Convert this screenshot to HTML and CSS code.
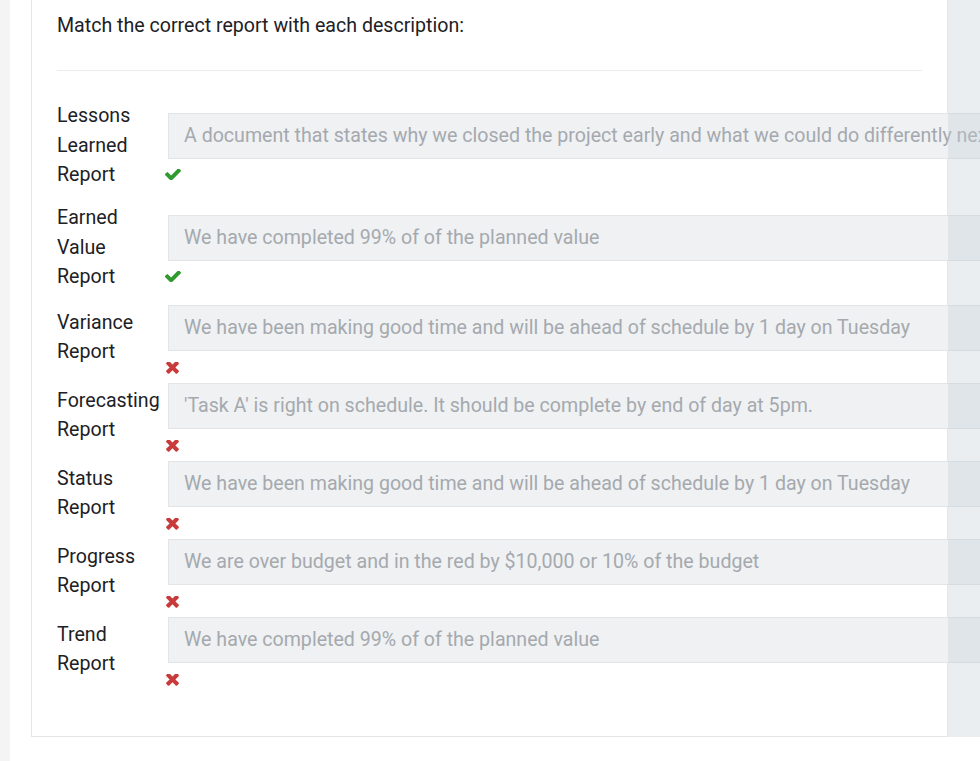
FILE: index.html
```html
<!DOCTYPE html>
<html lang="en">

<head>
    <meta charset="utf-8">
    <meta name="viewport" content="width=device-width, initial-scale=1.0">
    <title>Match reports</title>
    <link rel="stylesheet" href="styles.css">
</head>

<body>
    <div class="strip"></div>

    <main class="side">
        <div class="kort">
            <p class="spoergsmaal">Match the correct report with each description:</p>
            <hr class="streg">

            <div class="raekker">
                <div class="raekke">
                    <div class="navn">Lessons Learned Report</div>
                    <div class="svar">
                        <div class="felt">A document that states why we closed the project early and what we could do differently next time</div>
                        <div class="ikon"><svg class="rigtig" viewBox="120 420 1560 1020"><path d="M1671 566q0 40-28 68l-724 724-136 136q-28 28-68 28t-68-28l-136-136-362-362q-28-28-28-68t28-68l136-136q28-28 68-28t68 28l294 295 656-657q28-28 68-28t68 28l136 136q28 28 28 68z"/></svg></div>
                    </div>
                </div>

                <div class="raekke">
                    <div class="navn">Earned Value Report</div>
                    <div class="svar">
                        <div class="felt">We have completed 99% of of the planned value</div>
                        <div class="ikon"><svg class="rigtig" viewBox="120 420 1560 1020"><path d="M1671 566q0 40-28 68l-724 724-136 136q-28 28-68 28t-68-28l-136-136-362-362q-28-28-28-68t28-68l136-136q28-28 68-28t68 28l294 295 656-657q28-28 68-28t68 28l136 136q28 28 28 68z"/></svg></div>
                    </div>
                </div>

                <div class="raekke">
                    <div class="navn">Variance Report</div>
                    <div class="svar">
                        <div class="felt">We have been making good time and will be ahead of schedule by 1 day on Tuesday</div>
                        <div class="ikon"><svg class="forkert" viewBox="100 460 1210 1110"><path d="M1298 1322q0 40-28 68l-136 136q-28 28-68 28t-68-28l-294-294-294 294q-28 28-68 28t-68-28l-136-136q-28-28-28-68t28-68l294-294-294-294q-28-28-28-68t28-68l136-136q28-28 68-28t68 28l294 294 294-294q28-28 68-28t68 28l136 136q28 28 28 68t-28 68l-294 294 294 294q28 28 28 68z"/></svg></div>
                    </div>
                </div>

                <div class="raekke">
                    <div class="navn">Forecasting Report</div>
                    <div class="svar">
                        <div class="felt">'Task A' is right on schedule. It should be complete by end of day at 5pm.</div>
                        <div class="ikon"><svg class="forkert" viewBox="100 460 1210 1110"><path d="M1298 1322q0 40-28 68l-136 136q-28 28-68 28t-68-28l-294-294-294 294q-28 28-68 28t-68-28l-136-136q-28-28-28-68t28-68l294-294-294-294q-28-28-28-68t28-68l136-136q28-28 68-28t68 28l294 294 294-294q28-28 68-28t68 28l136 136q28 28 28 68t-28 68l-294 294 294 294q28 28 28 68z"/></svg></div>
                    </div>
                </div>

                <div class="raekke">
                    <div class="navn">Status Report</div>
                    <div class="svar">
                        <div class="felt">We have been making good time and will be ahead of schedule by 1 day on Tuesday</div>
                        <div class="ikon"><svg class="forkert" viewBox="100 460 1210 1110"><path d="M1298 1322q0 40-28 68l-136 136q-28 28-68 28t-68-28l-294-294-294 294q-28 28-68 28t-68-28l-136-136q-28-28-28-68t28-68l294-294-294-294q-28-28-28-68t28-68l136-136q28-28 68-28t68 28l294 294 294-294q28-28 68-28t68 28l136 136q28 28 28 68t-28 68l-294 294 294 294q28 28 28 68z"/></svg></div>
                    </div>
                </div>

                <div class="raekke">
                    <div class="navn">Progress Report</div>
                    <div class="svar">
                        <div class="felt">We are over budget and in the red by $10,000 or 10% of the budget</div>
                        <div class="ikon"><svg class="forkert" viewBox="100 460 1210 1110"><path d="M1298 1322q0 40-28 68l-136 136q-28 28-68 28t-68-28l-294-294-294 294q-28 28-68 28t-68-28l-136-136q-28-28-28-68t28-68l294-294-294-294q-28-28-28-68t28-68l136-136q28-28 68-28t68 28l294 294 294-294q28-28 68-28t68 28l136 136q28 28 28 68t-28 68l-294 294 294 294q28 28 28 68z"/></svg></div>
                    </div>
                </div>

                <div class="raekke">
                    <div class="navn">Trend Report</div>
                    <div class="svar">
                        <div class="felt">We have completed 99% of of the planned value</div>
                        <div class="ikon"><svg class="forkert" viewBox="100 460 1210 1110"><path d="M1298 1322q0 40-28 68l-136 136q-28 28-68 28t-68-28l-294-294-294 294q-28 28-68 28t-68-28l-136-136q-28-28-28-68t28-68l294-294-294-294q-28-28-28-68t28-68l136-136q28-28 68-28t68 28l294 294 294-294q28-28 68-28t68 28l136 136q28 28 28 68t-28 68l-294 294 294 294q28 28 28 68z"/></svg></div>
                    </div>
                </div>
            </div>
        </div>

        <div class="panel"></div>
    </main>
</body>

</html>
```

FILE: styles.css
```css
body {
    margin: 0;
    display: flex;
    min-height: 761px;
    overflow: hidden;
    background-color: #ffffff;
    font-family: Roboto, "Liberation Sans", sans-serif;
    color: #1d2125;
}

.strip {
    width: 10px;
    flex-shrink: 0;
    background-color: #f4f4f4;
}

.side {
    display: flex;
    align-items: stretch;
    padding-left: 21px;
    padding-bottom: 24px;
    height: 737px;
}

.kort {
    width: 865px;
    padding: 6px 25px 0 25px;
    border: 1px solid #e6e6e6;
    border-top: none;
}

.spoergsmaal {
    margin: 0;
    font-size: 19.6px;
    line-height: 40px;
}

.streg {
    margin: 24px 0 0 0;
    border: none;
    border-top: 1px solid #ececec;
}

.raekker {
    display: flex;
    flex-direction: column;
    gap: 13.5px;
    margin-top: 30px;
}

.raekke {
    display: flex;
    align-items: center;
}

.navn {
    width: 104px;
    padding-right: 7px;
    flex-shrink: 0;
    font-size: 19.6px;
    line-height: 29.5px;
}

.svar {
    height: 64.5px;
}

.felt {
    width: 830px;
    height: 44px;
    box-sizing: content-box;
    padding: 0 15px;
    border: 1px solid #e2e4e7;
    background-color: #eff1f3;
    color: #a5a9ae;
    font-size: 19.6px;
    line-height: 44px;
    white-space: nowrap;
    overflow: hidden;
}

.ikon {
    height: 18.5px;
    margin-left: -3px;
}

.rigtig {
    display: block;
    width: 16px;
    height: 11px;
    margin-top: 10px;
    fill: #2f9a2f;
}

.forkert {
    display: block;
    width: 13px;
    height: 12px;
    margin-top: 11px;
    margin-left: 1px;
    fill: #c93a3a;
}

.panel {
    position: relative;
    width: 32px;
    flex-shrink: 0;
    background-color: rgba(196, 205, 214, 0.35);
}
```
